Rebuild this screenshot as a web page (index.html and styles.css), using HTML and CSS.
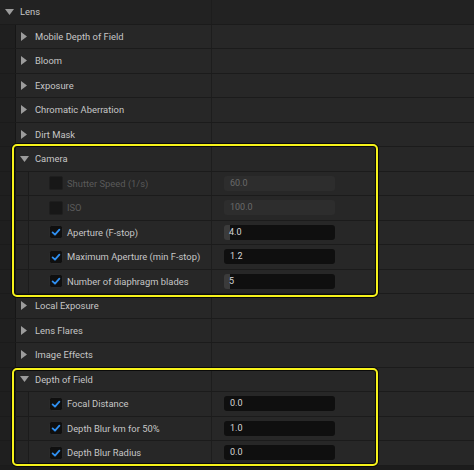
FILE: index.html
```html
<!DOCTYPE html>
<html>
<head>
<meta charset="utf-8">
<link rel="stylesheet" href="styles.css">
</head>
<body>
<div class="panel">
  <div class="row top">
    <div class="name lens"><svg class="tri-d" width="9" height="6" viewBox="0 0 9 6"><polygon points="0,0 9,0 4.5,6"/></svg><span>Lens</span></div>
    <div class="val"></div>
  </div>

  <div class="row"><div class="gut"></div><div class="name l1"><svg class="tri-r" width="6" height="9" viewBox="0 0 6 9"><polygon points="0,0 6,4.5 0,9"/></svg><span>Mobile Depth of Field</span></div><div class="val"></div></div>
  <div class="row"><div class="gut"></div><div class="name l1"><svg class="tri-r" width="6" height="9" viewBox="0 0 6 9"><polygon points="0,0 6,4.5 0,9"/></svg><span>Bloom</span></div><div class="val"></div></div>
  <div class="row"><div class="gut"></div><div class="name l1"><svg class="tri-r" width="6" height="9" viewBox="0 0 6 9"><polygon points="0,0 6,4.5 0,9"/></svg><span>Exposure</span></div><div class="val"></div></div>
  <div class="row"><div class="gut"></div><div class="name l1"><svg class="tri-r" width="6" height="9" viewBox="0 0 6 9"><polygon points="0,0 6,4.5 0,9"/></svg><span>Chromatic Aberration</span></div><div class="val"></div></div>
  <div class="row"><div class="gut"></div><div class="name l1"><svg class="tri-r" width="6" height="9" viewBox="0 0 6 9"><polygon points="0,0 6,4.5 0,9"/></svg><span>Dirt Mask</span></div><div class="val"></div></div>

  <div class="grp grp-cam">
    <div class="row"><div class="gut"></div><div class="name l1 open"><svg class="tri-d" width="9" height="6" viewBox="0 0 9 6"><polygon points="0,0 9,0 4.5,6"/></svg><span>Camera</span></div><div class="val"></div></div>
    <div class="row"><div class="gut"></div><div class="gut2"></div><div class="name l2 off"><span class="cb cb-off"></span><span>Shutter Speed (1/s)</span></div><div class="val"><div class="field dis">60.0</div></div></div>
    <div class="row"><div class="gut"></div><div class="gut2"></div><div class="name l2 off"><span class="cb cb-off"></span><span>ISO</span></div><div class="val"><div class="field dis">100.0</div></div></div>
    <div class="row"><div class="gut"></div><div class="gut2"></div><div class="name l2"><svg class="cb" width="14" height="14" viewBox="0 0 14 14"><rect x="0.5" y="0.5" width="13" height="13" rx="2" class="cbbox"/><path d="M3.6 7.4 L6 9.7 L10.4 4.6" class="cbmark"/></svg><span>Aperture (F-stop)</span></div><div class="val"><div class="field knob">4.0</div></div></div>
    <div class="row"><div class="gut"></div><div class="gut2"></div><div class="name l2"><svg class="cb" width="14" height="14" viewBox="0 0 14 14"><rect x="0.5" y="0.5" width="13" height="13" rx="2" class="cbbox"/><path d="M3.6 7.4 L6 9.7 L10.4 4.6" class="cbmark"/></svg><span>Maximum Aperture (min F-stop)</span></div><div class="val"><div class="field">1.2</div></div></div>
    <div class="row"><div class="gut"></div><div class="gut2"></div><div class="name l2"><svg class="cb" width="14" height="14" viewBox="0 0 14 14"><rect x="0.5" y="0.5" width="13" height="13" rx="2" class="cbbox"/><path d="M3.6 7.4 L6 9.7 L10.4 4.6" class="cbmark"/></svg><span>Number of diaphragm blades</span></div><div class="val"><div class="field knob">5</div></div></div>
  </div>

  <div class="row"><div class="gut"></div><div class="name l1"><svg class="tri-r" width="6" height="9" viewBox="0 0 6 9"><polygon points="0,0 6,4.5 0,9"/></svg><span>Local Exposure</span></div><div class="val"></div></div>
  <div class="row"><div class="gut"></div><div class="name l1"><svg class="tri-r" width="6" height="9" viewBox="0 0 6 9"><polygon points="0,0 6,4.5 0,9"/></svg><span>Lens Flares</span></div><div class="val"></div></div>
  <div class="row"><div class="gut"></div><div class="name l1"><svg class="tri-r" width="6" height="9" viewBox="0 0 6 9"><polygon points="0,0 6,4.5 0,9"/></svg><span>Image Effects</span></div><div class="val"></div></div>

  <div class="grp grp-dof">
    <div class="row"><div class="gut"></div><div class="name l1 open"><svg class="tri-d" width="9" height="6" viewBox="0 0 9 6"><polygon points="0,0 9,0 4.5,6"/></svg><span>Depth of Field</span></div><div class="val"></div></div>
    <div class="row"><div class="gut"></div><div class="gut2"></div><div class="name l2"><svg class="cb" width="14" height="14" viewBox="0 0 14 14"><rect x="0.5" y="0.5" width="13" height="13" rx="2" class="cbbox"/><path d="M3.6 7.4 L6 9.7 L10.4 4.6" class="cbmark"/></svg><span>Focal Distance</span></div><div class="val"><div class="field">0.0</div></div></div>
    <div class="row"><div class="gut"></div><div class="gut2"></div><div class="name l2"><svg class="cb" width="14" height="14" viewBox="0 0 14 14"><rect x="0.5" y="0.5" width="13" height="13" rx="2" class="cbbox"/><path d="M3.6 7.4 L6 9.7 L10.4 4.6" class="cbmark"/></svg><span>Depth Blur km for 50%</span></div><div class="val"><div class="field">1.0</div></div></div>
    <div class="row"><div class="gut"></div><div class="gut2"></div><div class="name l2"><svg class="cb" width="14" height="14" viewBox="0 0 14 14"><rect x="0.5" y="0.5" width="13" height="13" rx="2" class="cbbox"/><path d="M3.6 7.4 L6 9.7 L10.4 4.6" class="cbmark"/></svg><span>Depth Blur Radius</span></div><div class="val"><div class="field">0.0</div></div></div>
  </div>
</div>
</body>
</html>
```

FILE: styles.css
```css
html, body {
  margin: 0;
  padding: 0;
  background: #1c1c1c;
  width: 474px;
  height: 470px;
  overflow: hidden;
}

.panel {
  font-family: Roboto, "Liberation Sans", sans-serif;
  font-size: 9.4px;
  color: #c6c6c6;
}

.row {
  display: flex;
  height: 24.5px;
  box-sizing: border-box;
  border-bottom: 1px solid #1b1b1b;
  background: #272727;
}

.row.top {
  background: #222222;
}

.gut {
  flex: none;
  width: 16px;
  box-sizing: border-box;
  background: #1f1f1f;
  border-right: 1px solid #161616;
}

.gut2 {
  flex: none;
  width: 13px;
  box-sizing: border-box;
  background: #252525;
  border-right: 1px solid #1b1b1b;
}

.name {
  flex: 1;
  min-width: 0;
  display: flex;
  align-items: center;
  white-space: nowrap;
}

.val {
  flex: none;
  width: 263px;
  box-sizing: border-box;
  border-left: 1px solid #1d1d1d;
  display: flex;
  align-items: center;
  padding-left: 12px;
}

.tri-d, .tri-r {
  flex: none;
  fill: #9c9c9c;
}

.lens {
  padding-left: 5px;
}
.lens .tri-d {
  margin-right: 6px;
}

.l1 {
  padding-left: 5px;
}
.l1 .tri-r {
  margin-right: 8px;
}
.l1.open {
  padding-left: 4px;
}
.l1.open .tri-d {
  margin-right: 6px;
}

.l2 {
  padding-left: 20px;
}

.cb {
  flex: none;
  width: 14px;
  height: 14px;
  margin-right: 4px;
  display: block;
}

.cb-off {
  box-sizing: border-box;
  background: #171717;
  border: 1px solid #1e1e1e;
  border-radius: 2px;
}

.cbbox {
  fill: #0f0f0f;
  stroke: #2a2a2a;
  stroke-width: 1;
}

.cbmark {
  fill: none;
  stroke: #2f8ff0;
  stroke-width: 1.8;
  stroke-linecap: round;
  stroke-linejoin: round;
}

.off {
  color: #5a5a5a;
}

.field {
  width: 111px;
  height: 15px;
  box-sizing: border-box;
  border-radius: 3px;
  background: #0f0f0f;
  color: #d6d6d6;
  font-size: 9px;
  line-height: 15px;
  padding-left: 6px;
}

.field.dis {
  background: #2d2d2d;
  color: #6a6a6a;
}

.field.knob {
  background: linear-gradient(to right, #3b3b3b 0, #3b3b3b 6px, #0f0f0f 6px);
  padding-left: 5px;
}

.grp {
  position: relative;
}

.grp::after {
  content: "";
  position: absolute;
  left: 12px;
  width: 366px;
  box-sizing: border-box;
  border: 2px solid #f6f21a;
  border-radius: 5px;
  box-shadow: 0 0 0 1px #0a0a0a, inset 0 0 0 1px #0a0a0a;
  pointer-events: none;
}

.grp-cam::after {
  top: -3px;
  bottom: -3px;
}

.grp-dof::after {
  top: 0px;
  bottom: 0px;
}
```
